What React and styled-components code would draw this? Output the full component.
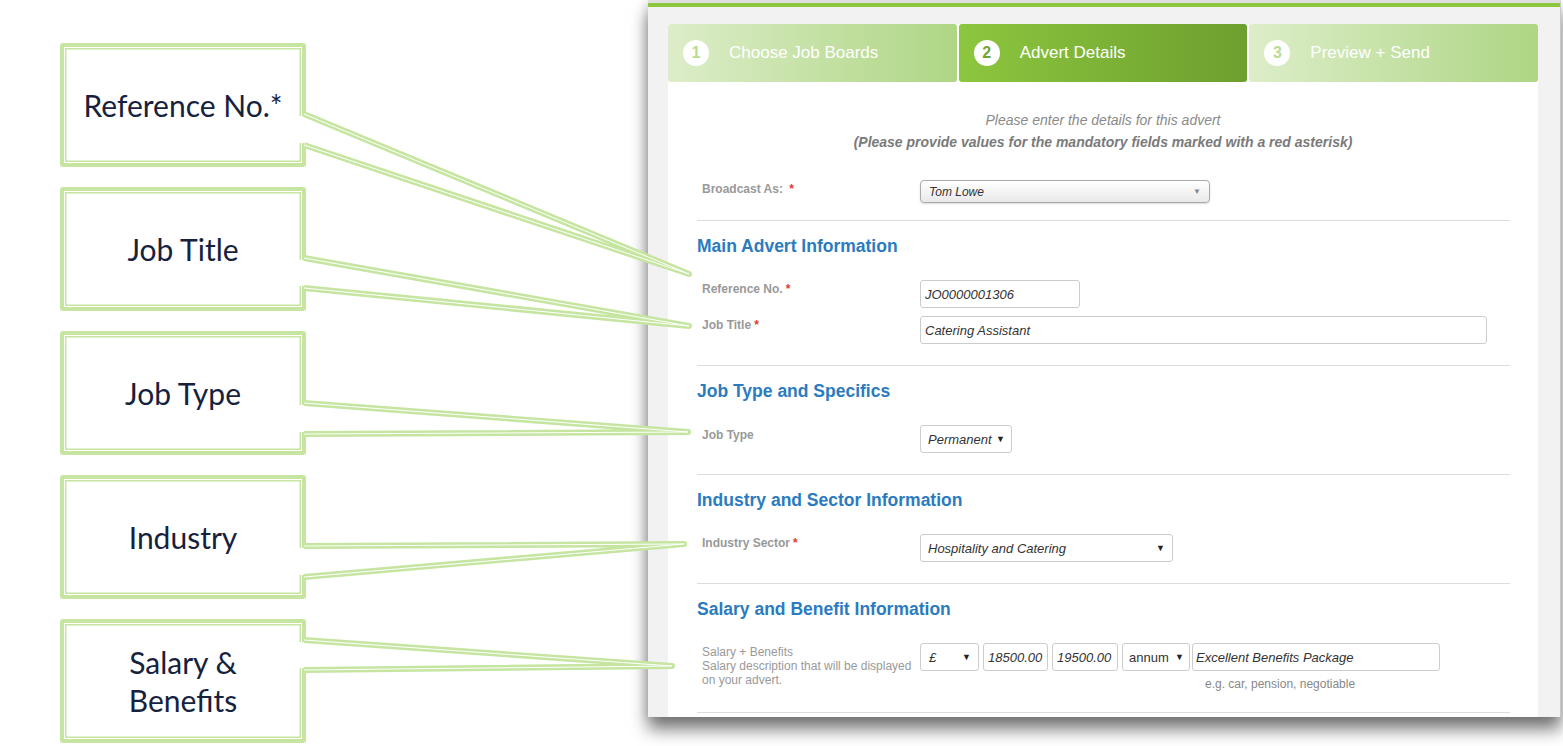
import React from "react";
import styled, { createGlobalStyle } from "styled-components";

const GlobalStyle = createGlobalStyle`
  html, body {
    margin: 0;
    padding: 0;
    background: #fff;
  }
  body {
    width: 1563px;
    height: 746px;
    overflow: hidden;
    font-family: "Liberation Sans", Arial, sans-serif;
  }
`;

const Page = styled.div`
  position: relative;
  display: flex;
  align-items: flex-start;
  width: 1563px;
  height: 746px;
`;

const Callouts = styled.div`
  display: flex;
  flex-direction: column;
  gap: 20px;
  padding: 43px 0 0 60px;
  width: 246px;
  flex-shrink: 0;
`;

const Callout = styled.div`
  box-sizing: border-box;
  height: 124px;
  border: 4px solid #c5e5a0;
  border-radius: 3px;
  box-shadow: inset 0 0 0 1px #fff, inset 0 0 0 2.5px #c5e5a0;
  display: flex;
  align-items: center;
  justify-content: center;
  text-align: center;
  font-family: Lato, "Open Sans", sans-serif;
  font-size: 30px;
  line-height: 38px;
  color: #16223d;
`;

const Pointers = styled.svg`
  position: absolute;
  left: 0;
  top: 0;
  width: 1563px;
  height: 746px;
  pointer-events: none;
  z-index: 2;
`;

const Window = styled.div`
  margin-left: 342px;
  width: 913px;
  height: 717px;
  box-sizing: border-box;
  background: #f2f2f2;
  border-top: 3px solid #dedede;
  border-right: 1px solid #c8c8c8;
  box-shadow: 0 12px 16px rgba(0, 0, 0, 0.55), -3px 0 8px rgba(0, 0, 0, 0.08);
  display: flex;
  flex-direction: column;
  padding: 0 22px 0 20px;
  flex-shrink: 0;
  overflow: hidden;
`;

const GreenBar = styled.div`
  height: 4px;
  flex-shrink: 0;
  background: #8dc63f;
  margin: 0 -22px 17px -20px;
`;

const Card = styled.div`
  flex: 1;
  min-height: 0;
  background: #fff;
  display: flex;
  flex-direction: column;
`;

const Steps = styled.div`
  display: flex;
  gap: 2px;
  height: 58px;
  flex-shrink: 0;
`;

const Step = styled.div`
  flex: 1;
  border-radius: 3px;
  display: flex;
  align-items: center;
  gap: 20px;
  padding-left: 15px;
  color: #fff;
  font-size: 17px;
  background: ${({ $active }) =>
    $active
      ? "linear-gradient(to right, #8dc63f, #6d9f2e)"
      : "linear-gradient(to right, #ddedc9, #aed684)"};
`;

const StepNum = styled.span`
  width: 26px;
  height: 26px;
  border-radius: 50%;
  background: #fff;
  display: flex;
  align-items: center;
  justify-content: center;
  font-size: 16px;
  font-weight: bold;
  color: ${({ $active }) => ($active ? "#72a532" : "#b9dc93")};
`;

const Intro = styled.div`
  padding-top: 27px;
  text-align: center;
  font-size: 14px;
  line-height: 22px;
  font-style: italic;
  color: #8a8a8a;
`;

const IntroStrong = styled.div`
  font-weight: bold;
  color: #7a7a7a;
`;

const Form = styled.div`
  padding: 0 28px 0 29px;
`;

const TopRow = styled.div`
  display: flex;
  margin-top: 27px;
  padding-bottom: 17px;
`;

const Section = styled.div`
  border-top: 1px solid #dcdcdc;
  padding: 16px 0 21px;
`;

const Divider = styled.div`
  border-top: 1px solid #dcdcdc;
`;

const Heading = styled.h3`
  margin: 0 0 25px;
  font-size: 17.5px;
  line-height: 18px;
  font-weight: bold;
  color: #2b7bc0;
`;

const Rows = styled.div`
  display: flex;
  flex-direction: column;
  gap: 8px;
`;

const Row = styled.div`
  display: flex;
  align-items: flex-start;
`;

const Label = styled.div`
  box-sizing: border-box;
  width: 223px;
  flex-shrink: 0;
  padding: ${({ $top }) => $top || 1}px 0 0 5px;
  font-size: 12px;
  line-height: ${({ $lh }) => $lh || 16}px;
  font-weight: ${({ $plain }) => ($plain ? "normal" : "bold")};
  color: #999;
`;

const Star = styled.span`
  color: #e53935;
  margin-left: 3px;
`;

const Field = styled.div`
  box-sizing: border-box;
  width: ${({ $w }) => $w}px;
  height: 28px;
  margin-left: ${({ $ml }) => $ml || 0}px;
  border: 1px solid #ccc;
  border-radius: 3px;
  padding: 0 ${({ $pr }) => $pr || 4}px 0 ${({ $pl }) => $pl || 4}px;
  display: flex;
  align-items: center;
  justify-content: space-between;
  font-size: 13px;
  font-style: ${({ $upright }) => ($upright ? "normal" : "italic")};
  color: #333;
  white-space: nowrap;
  flex-shrink: 0;
`;

const Arrow = styled.span`
  font-style: normal;
  font-size: ${({ $size }) => $size || 9}px;
  color: ${({ $color }) => $color || "#222"};
`;

const Dropdown = styled.div`
  box-sizing: border-box;
  width: 290px;
  height: 23px;
  border: 1px solid #aaa;
  border-radius: 4px;
  background: linear-gradient(#ffffff, #e9e9e9);
  box-shadow: 0 1px 2px rgba(0, 0, 0, 0.15);
  padding: 0 8px;
  display: flex;
  align-items: center;
  justify-content: space-between;
  font-size: 12px;
  font-style: italic;
  color: #333;
`;

const SalaryGroup = styled.div`
  display: flex;
  flex-direction: column;
`;

const SalaryInputs = styled.div`
  display: flex;
  gap: 4px;
`;

const Hint = styled.div`
  margin: 6px 0 0 285px;
  font-size: 12px;
  line-height: 14px;
  color: #888;
`;

const pointers = [
  { y1: 114, y2: 145, tx: 689, ty: 274 },
  { y1: 258, y2: 288, tx: 689, ty: 326 },
  { y1: 403, y2: 434, tx: 688, ty: 432 },
  { y1: 546, y2: 577, tx: 684, ty: 544 },
  { y1: 640, y2: 670, tx: 672, ty: 666 },
];

const App = () => {
  return (
    <Page>
      <GlobalStyle />
      <Callouts>
        <Callout>Reference No.*</Callout>
        <Callout>Job Title</Callout>
        <Callout>Job Type</Callout>
        <Callout>Industry</Callout>
        <Callout>
          Salary &amp;
          <br />
          Benefits
        </Callout>
      </Callouts>

      <Window>
        <GreenBar />
        <Card>
          <Steps>
            <Step>
              <StepNum>1</StepNum>
              Choose Job Boards
            </Step>
            <Step $active>
              <StepNum $active>2</StepNum>
              Advert Details
            </Step>
            <Step>
              <StepNum>3</StepNum>
              Preview + Send
            </Step>
          </Steps>

          <Intro>
            Please enter the details for this advert
            <IntroStrong>
              (Please provide values for the mandatory fields marked with a red asterisk)
            </IntroStrong>
          </Intro>

          <Form>
            <TopRow>
              <Label>
                Broadcast As: <Star>*</Star>
              </Label>
              <Dropdown>
                Tom Lowe
                <Arrow $size={8} $color="#888">▼</Arrow>
              </Dropdown>
            </TopRow>

            <Section>
              <Heading>Main Advert Information</Heading>
              <Rows>
                <Row>
                  <Label>
                    Reference No.<Star>*</Star>
                  </Label>
                  <Field $w={160}>JO0000001306</Field>
                </Row>
                <Row>
                  <Label>
                    Job Title<Star>*</Star>
                  </Label>
                  <Field $w={567}>Catering Assistant</Field>
                </Row>
              </Rows>
            </Section>

            <Section>
              <Heading>Job Type and Specifics</Heading>
              <Row>
                <Label $top={2}>Job Type</Label>
                <Field $w={92} $pl={7} $pr={6}>
                  Permanent
                  <Arrow>▼</Arrow>
                </Field>
              </Row>
            </Section>

            <Section>
              <Heading>Industry and Sector Information</Heading>
              <Row>
                <Label>
                  Industry Sector<Star>*</Star>
                </Label>
                <Field $w={253} $pl={7} $pr={7}>
                  Hospitality and Catering
                  <Arrow>▼</Arrow>
                </Field>
              </Row>
            </Section>

            <Section>
              <Heading>Salary and Benefit Information</Heading>
              <Row>
                <Label $plain $top={2} $lh={14}>
                  Salary + Benefits
                  <br />
                  Salary description that will be displayed on your advert.
                </Label>
                <SalaryGroup>
                  <SalaryInputs>
                    <Field $w={59} $pl={8} $pr={7}>
                      £<Arrow>▼</Arrow>
                    </Field>
                    <Field $w={65}>18500.00</Field>
                    <Field $w={66}>19500.00</Field>
                    <Field $w={68} $upright $pl={6} $pr={5}>
                      annum<Arrow>▼</Arrow>
                    </Field>
                    <Field $w={248} $ml={-2} $pl={3}>
                      Excellent Benefits Package
                    </Field>
                  </SalaryInputs>
                  <Hint>e.g. car, pension, negotiable</Hint>
                </SalaryGroup>
              </Row>
            </Section>
            <Divider />
          </Form>
        </Card>
      </Window>

      <Pointers viewBox="0 0 1563 746">
        {pointers.map((p, i) => {
          const d = `M304 ${p.y1} L${p.tx} ${p.ty} L304 ${p.y2}`;
          return (
            <g key={i}>
              <rect x="296" y={p.y1 + 2} width="14" height={p.y2 - p.y1 - 4} fill="#fff" />
              <path d={d} fill="#fff" stroke="#c5e5a0" strokeWidth="6" strokeLinejoin="round" />
              <path d={d} fill="none" stroke="#fff" strokeWidth="1" strokeLinejoin="round" />
            </g>
          );
        })}
      </Pointers>
    </Page>
  );
};

export default App;
